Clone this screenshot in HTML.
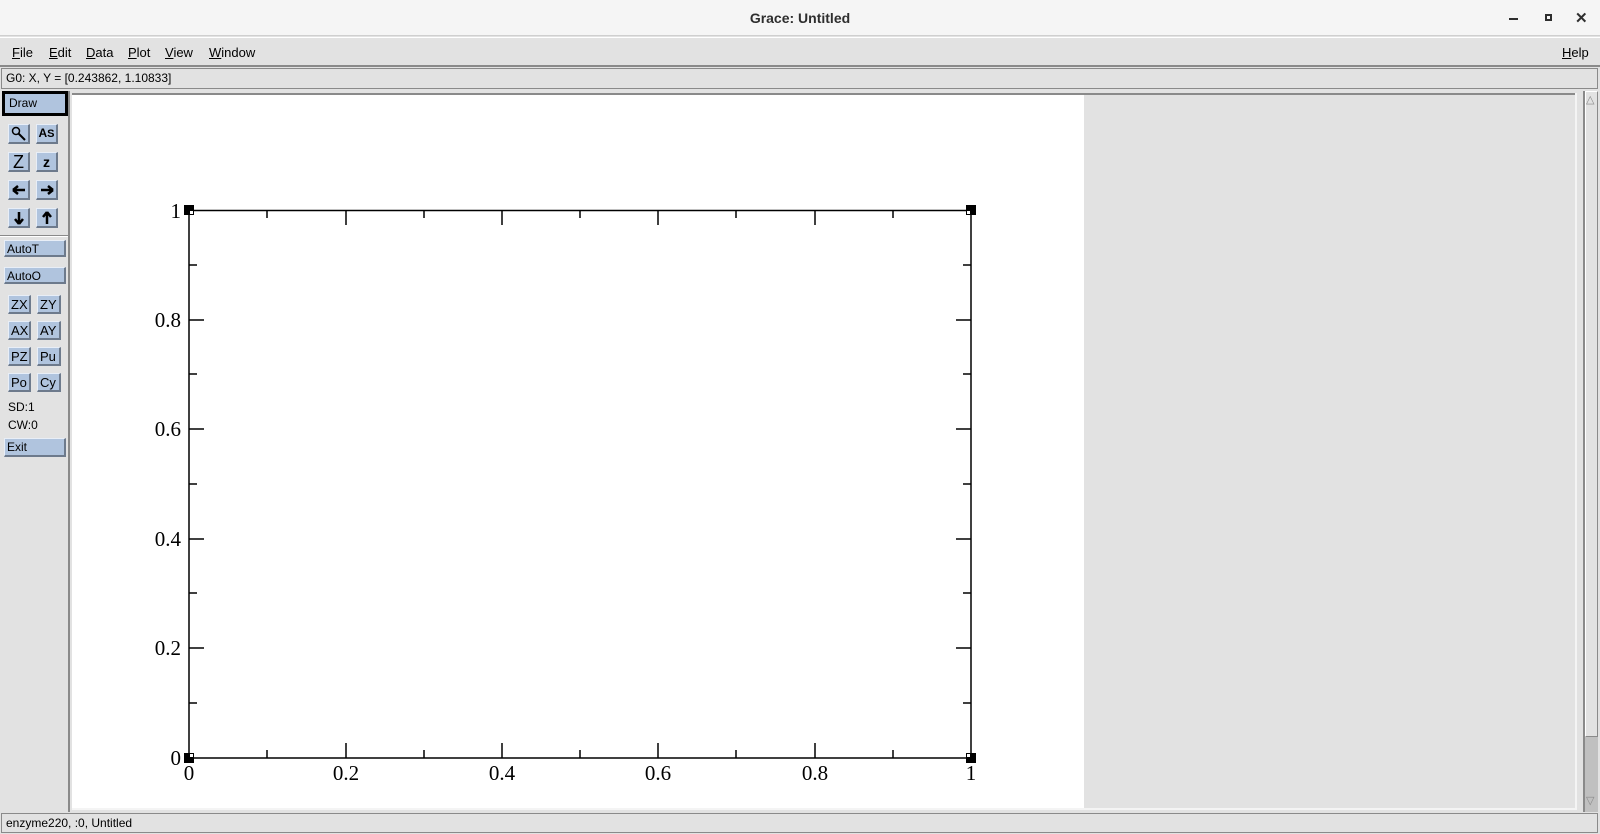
<!DOCTYPE html>
<html><head><meta charset="utf-8"><style>
*{margin:0;padding:0;box-sizing:border-box}
body{width:1600px;height:834px;background:#e2e2e2;font-family:"Liberation Sans",sans-serif;position:relative;overflow:hidden;color:#000}
.abs{position:absolute}
#title{left:0;top:0;width:1600px;height:36px;background:#f5f5f5;border-bottom:1px solid #cfcfcf;text-align:center;line-height:36px;font-size:14px;color:#2e2e2e;font-weight:600}
#menu{left:0;top:37px;width:1600px;height:30px;background:#e2e2e2;border-top:1px solid #fff;border-bottom:2px solid #8a8a8a;font-size:13px}
#menu span{position:absolute;top:7px}
#menu u{text-decoration:underline}
#stat{left:1px;top:68px;width:1597px;height:21px;border:1px solid #8a8a8a;font-size:12px;line-height:19px;padding-left:4px;background:#e2e2e2}
#left{left:0;top:91px;width:70px;height:721px;border-right:2px solid #8a8a8a}
.btn{position:absolute;background:#b0c4de;border-top:1px solid #e8eef7;border-left:1px solid #e8eef7;border-right:2px solid #6d7a8c;border-bottom:2px solid #6d7a8c;font-size:12px;line-height:16px;padding-left:2px}
.ib{width:22px;height:20px;padding:0}
.ib svg{display:block}
#canvas{left:72px;top:93px;width:1503px;height:717px;background:#e2e2e2;border-top:2px solid #8a8a8a}
#scroll{left:1583px;top:91px;width:15px;height:721px;background:#c0c0c0;border-left:2px solid #8a8a8a}
#bstat{left:1px;top:813px;width:1597px;height:20px;border:1px solid #8a8a8a;font-size:12px;line-height:18px;padding-left:4px}
</style></head><body>
<div id="title" class="abs">Grace: Untitled</div>
<div class="abs" style="left:1509px;top:18px;width:9px;height:2px;background:#2e2e2e"></div>
<div class="abs" style="left:1545px;top:14px;width:7px;height:7px;border:2px solid #2e2e2e"></div>
<div class="abs" style="left:1575px;top:9px;font-size:15px;font-weight:bold;color:#2e2e2e">✕</div>
<div id="menu" class="abs">
<span style="left:12px"><u>F</u>ile</span><span style="left:49px"><u>E</u>dit</span><span style="left:86px"><u>D</u>ata</span><span style="left:128px"><u>P</u>lot</span><span style="left:165px"><u>V</u>iew</span><span style="left:209px"><u>W</u>indow</span><span style="left:1562px"><u>H</u>elp</span>
</div>
<div id="stat" class="abs">G0: X, Y = [0.243862, 1.10833]</div>
<div id="left" class="abs">
<div class="btn" style="left:2px;top:0;width:66px;height:25px;border:3px solid #000;line-height:19px;padding-left:4px">Draw</div>
<div class="btn ib" style="left:8px;top:33px"><svg width="20" height="18"><circle cx="7" cy="6" r="3.5" fill="none" stroke="#000" stroke-width="1.5"/><line x1="9.5" y1="8.5" x2="16" y2="15" stroke="#000" stroke-width="2"/></svg></div>
<div class="btn ib" style="left:36px;top:33px;font-size:12px;font-weight:bold;line-height:16px;text-align:center">A<span style="font-size:11px">S</span></div>
<div class="btn ib" style="left:8px;top:61px;font-size:18px;text-align:center;line-height:18px">Z</div>
<div class="btn ib" style="left:36px;top:61px;font-size:14px;font-weight:bold;text-align:center;line-height:18px">z</div>
<div class="btn ib" style="left:8px;top:89px"><svg width="20" height="18"><path d="M4 9h12M4 9l5-4M4 9l5 4" stroke="#000" stroke-width="2.5" fill="none"/></svg></div>
<div class="btn ib" style="left:36px;top:89px"><svg width="20" height="18"><path d="M4 9h12M16 9l-5-4M16 9l-5 4" stroke="#000" stroke-width="2.5" fill="none"/></svg></div>
<div class="btn ib" style="left:8px;top:117px"><svg width="20" height="18"><path d="M10 3v12M10 15l-4-5M10 15l4-5" stroke="#000" stroke-width="2.5" fill="none"/></svg></div>
<div class="btn ib" style="left:36px;top:117px"><svg width="20" height="18"><path d="M10 3v12M10 3l-4 5M10 3l4 5" stroke="#000" stroke-width="2.5" fill="none"/></svg></div>
<div class="abs" style="left:0;top:144px;width:68px;height:2px;border-top:1px solid #8a8a8a;border-bottom:1px solid #fff"></div>
<div class="btn" style="left:4px;top:149px;width:62px;height:17px">AutoT</div>
<div class="btn" style="left:4px;top:176px;width:62px;height:17px">AutoO</div>
<div class="btn" style="left:8px;top:204px;width:23px;height:19px;line-height:17px;font-size:13px">ZX</div>
<div class="btn" style="left:37px;top:204px;width:24px;height:19px;line-height:17px;font-size:13px">ZY</div>
<div class="btn" style="left:8px;top:230px;width:23px;height:19px;line-height:17px;font-size:13px">AX</div>
<div class="btn" style="left:37px;top:230px;width:24px;height:19px;line-height:17px;font-size:13px">AY</div>
<div class="btn" style="left:8px;top:256px;width:23px;height:19px;line-height:17px;font-size:13px">PZ</div>
<div class="btn" style="left:37px;top:256px;width:24px;height:19px;line-height:17px;font-size:13px">Pu</div>
<div class="btn" style="left:8px;top:282px;width:23px;height:19px;line-height:17px;font-size:13px">Po</div>
<div class="btn" style="left:37px;top:282px;width:24px;height:19px;line-height:17px;font-size:13px">Cy</div>
<div class="abs" style="left:8px;top:309px;font-size:12px">SD:1</div>
<div class="abs" style="left:8px;top:327px;font-size:12px">CW:0</div>
<div class="btn" style="left:4px;top:347px;width:62px;height:19px">Exit</div>
</div>
<div id="canvas" class="abs"></div>
<div class="abs" style="left:1575px;top:93px;width:2px;height:717px;background:#f4f4f4"></div>
<div class="abs" style="left:72px;top:808px;width:1505px;height:2px;background:#f4f4f4"></div>
<div id="scroll" class="abs">
<div class="abs" style="left:0;top:0;width:13px;height:646px;background:#e2e2e2;border:1px solid #8a8a8a;border-top-color:#fff;border-left-color:#fff"></div>
<div class="abs" style="left:1px;top:2px;font-size:11px;color:#8a8a8a">△</div>
<div class="abs" style="left:1px;top:703px;font-size:11px;color:#8a8a8a">▽</div>
</div>
<svg class="abs" style="left:72px;top:95px" width="1012" height="713" viewBox="72 95 1012 713">
<rect x="72" y="95" width="1012" height="713" fill="#fff"/>
<g stroke="#000" stroke-width="1.5" fill="none">
<rect x="189" y="210.5" width="782" height="547.5"/>
<path d="M267 210v8M424 210v8M580 210v8M736 210v8M893 210v8M267 758v-8M424 758v-8M580 758v-8M736 758v-8M893 758v-8
M346 210v15M502 210v15M658 210v15M815 210v15M346 758v-15M502 758v-15M658 758v-15M815 758v-15
M189 265h8M189 374h8M189 484h8M189 593h8M189 703h8M971 265h-8M971 374h-8M971 484h-8M971 593h-8M971 703h-8
M189 320h15M189 429h15M189 539h15M189 648h15M971 320h-15M971 429h-15M971 539h-15M971 648h-15"/>
</g>
<g fill="#000"><rect x="184" y="205" width="10" height="10"/><rect x="966" y="205" width="10" height="10"/><rect x="184" y="753" width="10" height="10"/><rect x="966" y="753" width="10" height="10"/></g>
<g fill="#fff"><rect x="190" y="211" width="3" height="3"/><rect x="967" y="211" width="3" height="3"/><rect x="190" y="754" width="3" height="3"/><rect x="967" y="754" width="3" height="3"/></g>
<g font-family="Liberation Serif,serif" font-size="21" text-anchor="middle">
<text x="189" y="780">0</text><text x="346" y="780">0.2</text><text x="502" y="780">0.4</text><text x="658" y="780">0.6</text><text x="815" y="780">0.8</text><text x="971" y="780">1</text>
</g>
<g font-family="Liberation Serif,serif" font-size="21" text-anchor="end">
<text x="181" y="765">0</text><text x="181" y="655">0.2</text><text x="181" y="546">0.4</text><text x="181" y="436">0.6</text><text x="181" y="327">0.8</text><text x="181" y="218">1</text>
</g>
</svg>
<div id="bstat" class="abs">enzyme220, :0, Untitled</div>
</body></html>
